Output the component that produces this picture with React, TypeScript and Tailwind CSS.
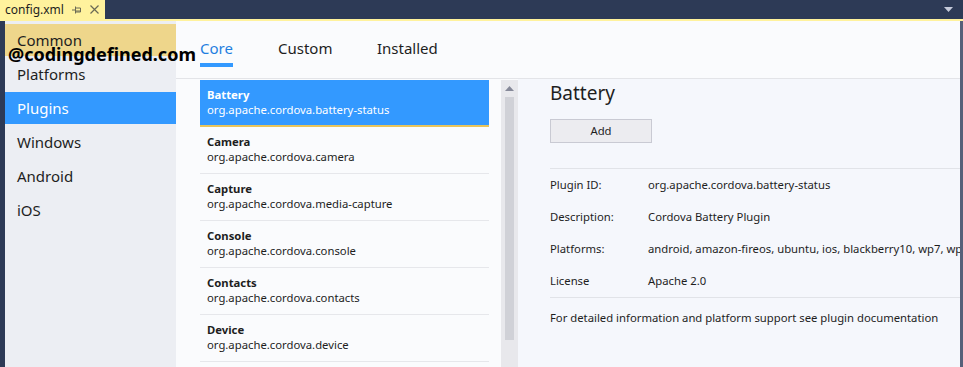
import React from 'react';

const font = { fontFamily: '"Noto Sans", "Open Sans", sans-serif' };

const sideItems = ['Common', 'Platforms', 'Plugins', 'Windows', 'Android', 'iOS'];

const plugins = [
  { name: 'Battery', id: 'org.apache.cordova.battery-status' },
  { name: 'Camera', id: 'org.apache.cordova.camera' },
  { name: 'Capture', id: 'org.apache.cordova.media-capture' },
  { name: 'Console', id: 'org.apache.cordova.console' },
  { name: 'Contacts', id: 'org.apache.cordova.contacts' },
  { name: 'Device', id: 'org.apache.cordova.device' },
];

const details = [
  { label: 'Plugin ID:', value: 'org.apache.cordova.battery-status' },
  { label: 'Description:', value: 'Cordova Battery Plugin' },
  {
    label: 'Platforms:',
    value: 'android, amazon-fireos, ubuntu, ios, blackberry10, wp7, wp8, windows8, firefoxos',
  },
  { label: 'License', value: 'Apache 2.0' },
];

const PinIcon = () => (
  <svg width="10" height="8" viewBox="0 0 10 8" className="text-[#6b6a55]">
    <path d="M0 4h3M3.5 0.5v7M3.5 2h5v4h-5M4 5h4.5" stroke="currentColor" strokeWidth="1" fill="none" />
  </svg>
);

const CloseIcon = () => (
  <svg width="9" height="9" viewBox="0 0 9 9" className="text-[#6b6a55]">
    <path d="M0.5 0.5l8 8M8.5 0.5l-8 8" stroke="currentColor" strokeWidth="1.2" />
  </svg>
);

const App: React.FC = () => {
  return (
    <div
      className="w-[963px] h-[367px] bg-[#2d3a56] flex flex-col overflow-hidden relative text-[#1e1e1e]"
      style={font}
    >
      {/* document tab strip */}
      <div className="h-[19px] flex items-stretch">
        <div className="w-[105px] bg-[#fff29d] flex items-center pl-[5px]">
          <span className="w-[67px] text-[12px] leading-none text-[#1e1e1e]">config.xml</span>
          <span className="flex items-center">
            <PinIcon />
          </span>
          <span className="ml-[8px] flex items-center">
            <CloseIcon />
          </span>
        </div>
        <div className="flex-1 flex items-center justify-end pr-[10px]">
          <svg width="9" height="5" viewBox="0 0 9 5">
            <path d="M0 0h9L4.5 5z" fill="#c6cbdb" />
          </svg>
        </div>
      </div>
      <div className="h-[2px] bg-[#fff29d]" />

      <div className="flex-1 flex pl-[5px] border-r-[3px] border-[#566079]">
        {/* left category list */}
        <div className="w-[171px] bg-[#eceef3] pt-[2px]">
          {sideItems.map((item) => (
            <div key={item} className="h-[34px] py-[1px]">
              <div
                className={
                  'h-full flex items-center pl-[12px] text-[15px] ' +
                  (item === 'Common'
                    ? 'bg-[#eed68b]'
                    : item === 'Plugins'
                      ? 'bg-[#3399ff] text-white'
                      : '')
                }
              >
                {item}
              </div>
            </div>
          ))}
        </div>

        {/* main area */}
        <div className="flex-1 flex flex-col bg-[#fafbfd] min-w-0">
          <div className="h-[58px] shrink-0 border-b border-[#e3e4e8] flex items-start pl-[24px] pt-[16px] text-[15px]">
            <div className="w-[78px] flex flex-col">
              <span className="leading-[22px] text-[#1f7fe0]">Core</span>
              <div className="mt-[4px] w-[33px] h-[4px] bg-[#3399ff]" />
            </div>
            <span className="w-[99px] leading-[22px]">Custom</span>
            <span className="leading-[22px]">Installed</span>
          </div>

          <div className="flex-1 flex min-h-0">
            {/* plugin list */}
            <div className="flex pl-[24px] pt-[1px]">
              <div className="w-[289px]">
                {plugins.map((p, i) => (
                  <div
                    key={p.name}
                    className={
                      'h-[47px] pl-[7px] pt-[7px] text-[11.3px] leading-[15px] ' +
                      (i === 0
                        ? 'bg-[#3399ff] text-white border-b-2 border-[#e8c45a]'
                        : 'border-b border-[#e6e7eb]')
                    }
                  >
                    <div className="font-bold">{p.name}</div>
                    <div>{p.id}</div>
                  </div>
                ))}
              </div>
              <div className="ml-[12px] w-[17px] bg-[#e8e8ec] flex flex-col items-center">
                <svg width="9" height="5" viewBox="0 0 9 5" className="mt-[6px]">
                  <path d="M4.5 0L9 5H0z" fill="#868999" />
                </svg>
                <div className="mt-[6px] w-[9px] h-[243px] bg-[#d0d1d7]" />
              </div>
            </div>

            {/* plugin details */}
            <div className="flex-1 bg-[#f5f7fc] pl-[32px] overflow-hidden">
              <div className="text-[19px] leading-[28px]">Battery</div>
              <button className="mt-[12px] w-[102px] h-[24px] bg-[#ececf0] border border-[#c9cad3] text-[11.3px]">
                Add
              </button>
              <div className="mt-[25px] border-t border-[#e1e3e8]">
                {details.map((d) => (
                  <div key={d.label} className="h-[32px] flex items-center text-[11.3px] whitespace-nowrap">
                    <span className="w-[98px] shrink-0">{d.label}</span>
                    <span>{d.value}</span>
                  </div>
                ))}
              </div>
              <div className="border-t border-[#e1e3e8] pt-[12px] text-[11.3px] leading-[16px] whitespace-nowrap">
                For detailed information and platform support see plugin documentation
              </div>
            </div>
          </div>
        </div>
      </div>

      {/* watermark */}
      <div className="absolute left-[8px] top-[41px] text-[18px] font-bold text-black leading-[26px]">
        @codingdefined.com
      </div>
    </div>
  );
};

export default App;
